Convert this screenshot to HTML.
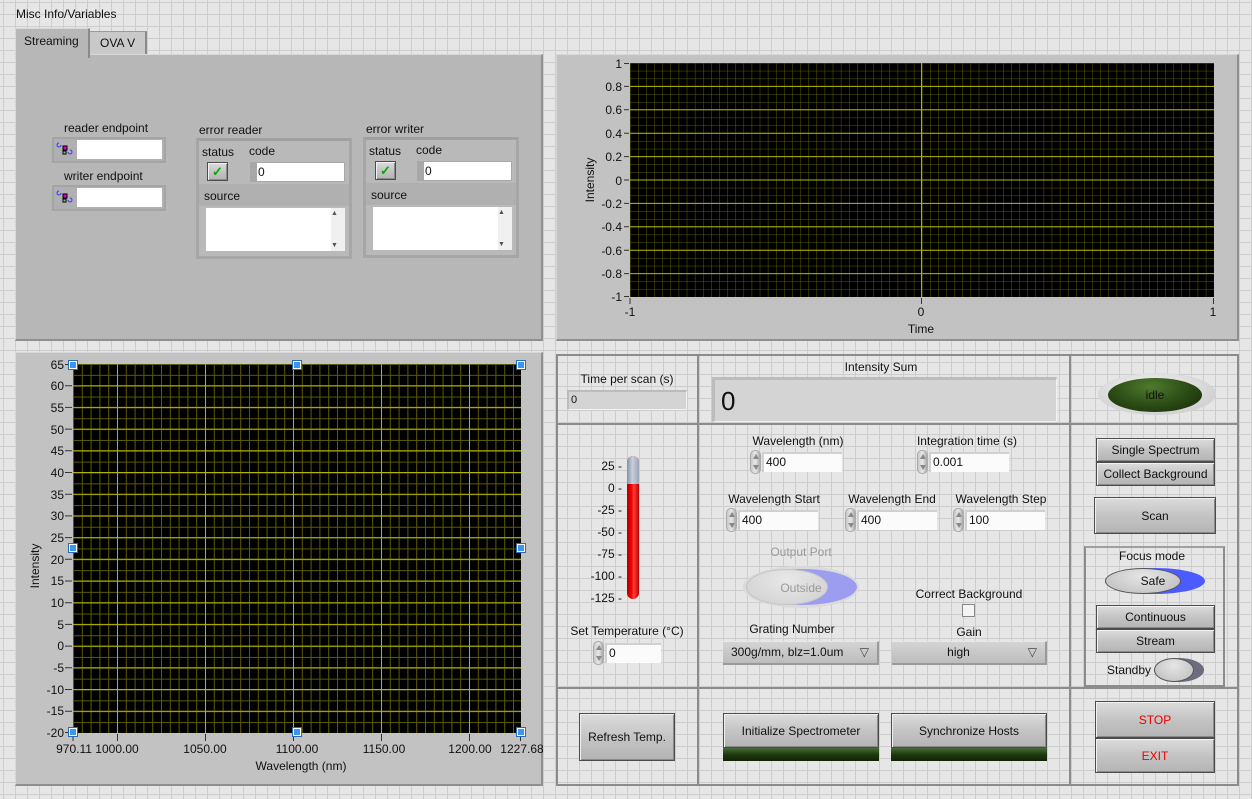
<!DOCTYPE html>
<html><head><meta charset="utf-8"><style>
*{box-sizing:border-box;margin:0;padding:0}
body{width:1252px;height:799px;overflow:hidden;position:relative;font-family:"Liberation Sans",sans-serif;font-size:12px;color:#111;
background-color:#e6e6e6;
background-image:linear-gradient(to right,#cdcdcd 1px,transparent 1px),linear-gradient(to bottom,#cdcdcd 1px,transparent 1px);
background-size:12px 12px;background-position:3px 2px}
.a{position:absolute}
.t{position:absolute;white-space:nowrap}
.c{position:absolute;white-space:nowrap;transform:translateX(-50%)}
.panel{position:absolute;background:#c2c2c2;border-right:2px solid #8f8f8f;border-bottom:2px solid #8f8f8f;border-left:1px solid #d8d8d8;border-top:1px solid #d8d8d8}
.frame{position:absolute;background:#b9b9b9;border:3px solid #a6a6a6;border-top-color:#a0a0a0}
.white{position:absolute;background:#fff}
.btn{position:absolute;background:linear-gradient(#dcdcdc,#c4c4c4 50%,#b4b4b4);border:1px solid #4c4c4c;box-shadow:inset 1px 1px 0 #f2f2f2,inset -1px -1px 0 #8a8a8a;display:flex;align-items:center;justify-content:center;font-size:12px}
.num{position:absolute;background:#fbfbfb;border-top:2px solid #d0d0d0;border-left:2px solid #d0d0d0;padding-left:2px;line-height:17px}
.spin{position:absolute;width:11px;height:24px;border-radius:5px;background:linear-gradient(to right,#c8c8c8,#e8e8e8,#a8a8a8);border:1px solid #aaa}
.spin:before{content:"";position:absolute;left:2px;top:3px;border:3px solid transparent;border-bottom:5px solid #888;border-top:0}
.spin:after{content:"";position:absolute;left:2px;bottom:3px;border:3px solid transparent;border-top:5px solid #888;border-bottom:0}
.line{position:absolute;background:#8c8c8c}
.drop{position:absolute;background:linear-gradient(#d4d4d4,#bcbcbc);border-top:1px solid #e8e8e8;border-bottom:2px solid #9a9a9a;border-right:2px solid #9a9a9a;line-height:20px}
.h{position:absolute;width:8px;height:8px;background:#3a96f0;border:1px solid #fff;outline:1px solid #2a6ab0}
.ico{position:absolute;width:18px;height:16px}
</style></head><body>

<div class="t" style="left:16px;top:7px">Misc Info/Variables</div>
<!-- tabs -->
<div class="a" style="left:89px;top:31px;width:58px;height:25px;background:#c9c9c9;border:1px solid #9a9a9a;border-right:2px solid #8a8a8a"></div>
<div class="t" style="left:100px;top:36px">OVA V</div>
<div class="panel" style="left:15px;top:54px;width:528px;height:287px;background:#b7b7b7"></div>
<div class="a" style="left:15px;top:28px;width:75px;height:30px;background:#b7b7b7;border:1px solid #d8d8d8;border-bottom:none;border-right:2px solid #8a8a8a"></div>
<div class="t" style="left:24px;top:34px">Streaming</div>

<!-- endpoints -->
<div class="t" style="left:64px;top:121px">reader endpoint</div>
<div class="a" style="left:52px;top:137px;width:114px;height:26px;border:2px solid #a4a4a4;background:#b0b0b0"></div>
<div class="white" style="left:77px;top:140px;width:85px;height:19px"></div>
<svg class="ico" style="left:56px;top:141px" viewBox="0 0 18 16"><path d="M3 2a2 2 0 1 0 2 2" stroke="#33f" fill="none"/><rect x="7" y="5" width="4" height="4" fill="#d0c" stroke="#000"/><rect x="7" y="10" width="3" height="3" fill="none" stroke="#000"/><path d="M12 11a2 2 0 1 0 2 -2" stroke="#33f" fill="none"/></svg>
<div class="t" style="left:64px;top:169px">writer endpoint</div>
<div class="a" style="left:52px;top:185px;width:114px;height:26px;border:2px solid #a4a4a4;background:#b0b0b0"></div>
<div class="white" style="left:77px;top:188px;width:85px;height:19px"></div>
<svg class="ico" style="left:56px;top:189px" viewBox="0 0 18 16"><path d="M3 2a2 2 0 1 0 2 2" stroke="#33f" fill="none"/><rect x="7" y="5" width="4" height="4" fill="#d0c" stroke="#000"/><rect x="7" y="10" width="3" height="3" fill="none" stroke="#000"/><path d="M12 11a2 2 0 1 0 2 -2" stroke="#33f" fill="none"/></svg>

<!-- error clusters -->
<div class="t" style="left:199px;top:123px">error reader</div>
<div class="frame" style="left:196px;top:138px;width:156px;height:121px"></div>
<div class="a" style="left:199px;top:184px;width:150px;height:22px;background:#b0b0b0"></div>
<div class="t" style="left:202px;top:145px">status</div>
<div class="t" style="left:249px;top:144px">code</div>
<div class="btn" style="left:207px;top:162px;width:21px;height:19px;color:#0a0;font-size:13px;font-weight:bold">✓</div>
<div class="a" style="left:250px;top:162px;width:95px;height:20px;background:#a8a8a8"></div>
<div class="white" style="left:257px;top:163px;width:87px;height:18px;line-height:18px;padding-left:1px">0</div>
<div class="t" style="left:204px;top:189px">source</div>
<div class="white" style="left:206px;top:208px;width:139px;height:43px;border-right:14px solid #f0f0f0"></div>
<div class="t" style="left:331px;top:210px;font-size:7px;color:#555">▲</div><div class="t" style="left:331px;top:242px;font-size:7px;color:#555">▼</div>

<div class="t" style="left:366px;top:122px">error writer</div>
<div class="frame" style="left:363px;top:137px;width:156px;height:121px"></div>
<div class="a" style="left:366px;top:183px;width:150px;height:22px;background:#b0b0b0"></div>
<div class="t" style="left:369px;top:144px">status</div>
<div class="t" style="left:416px;top:143px">code</div>
<div class="btn" style="left:375px;top:161px;width:21px;height:19px;color:#0a0;font-size:13px;font-weight:bold">✓</div>
<div class="a" style="left:417px;top:161px;width:95px;height:20px;background:#a8a8a8"></div>
<div class="white" style="left:424px;top:162px;width:87px;height:18px;line-height:18px;padding-left:1px">0</div>
<div class="t" style="left:371px;top:188px">source</div>
<div class="white" style="left:373px;top:207px;width:139px;height:43px;border-right:14px solid #f0f0f0"></div>
<div class="t" style="left:498px;top:209px;font-size:7px;color:#555">▲</div><div class="t" style="left:498px;top:241px;font-size:7px;color:#555">▼</div>

<!-- top-right graph -->
<div class="panel" style="left:556px;top:54px;width:683px;height:287px"></div>
<svg class="a" style="left:556px;top:54px" width="683" height="287">
<defs>
<pattern id="p1" x="74" y="9" width="8.11" height="7.8" patternUnits="userSpaceOnUse"><path d="M0 0H9M0 0V8" stroke="#5c5c00" stroke-width="1"/></pattern>
</defs>
<rect x="74" y="9" width="584" height="234" fill="#000"/>
<rect x="74" y="9" width="584" height="234" fill="url(#p1)"/>
<g stroke="#b4b400" stroke-width="1">
<path d="M74 32.4H658M74 55.8H658M74 79.2H658M74 102.6H658M74 126H658M74 149.4H658M74 172.8H658M74 196.2H658M74 219.6H658M365.5 9V243"/>
</g>
<g stroke="#333" stroke-width="1">
<path d="M68 9.5H73M68 32.4H73M68 55.8H73M68 79.2H73M68 102.6H73M68 126H73M68 149.4H73M68 172.8H73M68 196.2H73M68 219.6H73M68 242.5H73M74 244V250M365.5 244V250M657.5 244V250"/>
</g>
<g font-family="Liberation Sans" font-size="12" fill="#111" text-anchor="end">
<text x="66" y="14">1</text><text x="66" y="37">0.8</text><text x="66" y="60">0.6</text><text x="66" y="84">0.4</text><text x="66" y="107">0.2</text><text x="66" y="131">0</text><text x="66" y="154">-0.2</text><text x="66" y="177">-0.4</text><text x="66" y="201">-0.6</text><text x="66" y="224">-0.8</text><text x="66" y="247">-1</text>
</g>
<g font-family="Liberation Sans" font-size="12" fill="#111" text-anchor="middle">
<text x="74" y="262">-1</text><text x="365" y="262">0</text><text x="657" y="262">1</text><text x="365" y="279">Time</text>
<text transform="translate(38,126) rotate(-90)">Intensity</text>
</g>
</svg>

<!-- bottom-left graph -->
<div class="panel" style="left:15px;top:352px;width:528px;height:434px"></div>
<svg class="a" style="left:15px;top:352px" width="528" height="434">
<defs>
<pattern id="p2" x="102" y="12" width="8.8" height="10.85" patternUnits="userSpaceOnUse"><path d="M0.5 0H9M0 0.5H9M0.5 0V11" stroke="#5c5c00" stroke-width="1"/></pattern>
</defs>
<rect x="58" y="12" width="448" height="369" fill="#000"/>
<rect x="58" y="12" width="448" height="369" fill="url(#p2)"/>
<g stroke="#b4b400" stroke-width="1">
<path d="M58 33.7H506M58 55.4H506M58 77.1H506M58 98.8H506M58 120.5H506M58 142.2H506M58 163.9H506M58 185.6H506M58 207.3H506M58 229H506M58 250.7H506M58 272.4H506M58 294.1H506M58 315.8H506M58 337.5H506M58 359.2H506M102.5 12V381M190.5 12V381M278.5 12V381M366.5 12V381M454.5 12V381"/>
</g>
<g stroke="#333" stroke-width="1">
<path d="M50 12.5H57M50 33.7H57M50 55.4H57M50 77.1H57M50 98.8H57M50 120.5H57M50 142.2H57M50 163.9H57M50 185.6H57M50 207.3H57M50 229H57M50 250.7H57M50 272.4H57M50 294.1H57M50 315.8H57M50 337.5H57M50 359.2H57M50 380.5H57M58 382V389M102.5 382V389M190.5 382V389M278.5 382V389M366.5 382V389M454.5 382V389M505.5 382V389"/>
</g>
<g font-family="Liberation Sans" font-size="12" fill="#111" text-anchor="end">
<text x="49" y="17">65</text><text x="49" y="38">60</text><text x="49" y="60">55</text><text x="49" y="82">50</text><text x="49" y="103">45</text><text x="49" y="125">40</text><text x="49" y="147">35</text><text x="49" y="168">30</text><text x="49" y="190">25</text><text x="49" y="212">20</text><text x="49" y="233">15</text><text x="49" y="255">10</text><text x="49" y="277">5</text><text x="49" y="298">0</text><text x="49" y="320">-5</text><text x="49" y="342">-10</text><text x="49" y="363">-15</text><text x="49" y="385">-20</text>
</g>
<g font-family="Liberation Sans" font-size="12" fill="#111" text-anchor="middle">
<text x="59" y="401">970.11</text><text x="102" y="401">1000.00</text><text x="190" y="401">1050.00</text><text x="282" y="401">1100.00</text><text x="369" y="401">1150.00</text><text x="455" y="401">1200.00</text><text x="507" y="401">1227.68</text>
<text x="286" y="418">Wavelength (nm)</text>
<text transform="translate(24,214) rotate(-90)">Intensity</text>
</g>
</svg>
<div class="h" style="left:69px;top:361px"></div><div class="h" style="left:293px;top:361px"></div><div class="h" style="left:517px;top:361px"></div>
<div class="h" style="left:69px;top:544px"></div><div class="h" style="left:517px;top:544px"></div>
<div class="h" style="left:69px;top:728px"></div><div class="h" style="left:293px;top:728px"></div><div class="h" style="left:517px;top:728px"></div>

<!-- right control cluster frame -->
<div class="a" style="left:556px;top:354px;width:683px;height:432px;border:2px solid #8c8c8c"></div>
<div class="line" style="left:558px;top:423px;width:679px;height:2px"></div>
<div class="line" style="left:558px;top:687px;width:679px;height:2px"></div>
<div class="line" style="left:697px;top:356px;width:2px;height:428px"></div>
<div class="line" style="left:1069px;top:356px;width:2px;height:428px"></div>

<div class="c" style="left:627px;top:372px">Time per scan (s)</div>
<div class="a" style="left:567px;top:390px;width:120px;height:20px;background:#d4d4d4;border-top:2px solid #bcbcbc;border-left:2px solid #bcbcbc;border-right:1px solid #f2f2f2;border-bottom:1px solid #f2f2f2;padding-left:2px;line-height:16px;font-size:11px">0</div>
<div class="c" style="left:881px;top:360px">Intensity Sum</div>
<div class="a" style="left:712px;top:377px;width:345px;height:45px;background:#d4d4d4;border-top:3px solid #bcbcbc;border-left:3px solid #bcbcbc;border-right:1px solid #f2f2f2;border-bottom:1px solid #f2f2f2;padding-left:6px;line-height:42px;font-size:26px">0</div>
<div class="a" style="left:1098px;top:373px;width:118px;height:42px;border-radius:50%;background:radial-gradient(ellipse at 45% 40%,#f8f8f8,#d2d2d2 70%,#e6e6e6)"></div>
<div class="a" style="left:1108px;top:378px;width:94px;height:34px;border-radius:50%;background:radial-gradient(ellipse at 45% 25%,#4e7a2e,#2a4a14 55%,#142608);display:flex;align-items:center;justify-content:center">idle</div>

<!-- thermometer -->
<div class="a" style="left:627px;top:456px;width:12px;height:143px;border-radius:6px;background:linear-gradient(to right,#a00,#f00 40%,#ff4040 55%,#b00);"></div>
<div class="a" style="left:627px;top:456px;width:12px;height:28px;border-radius:6px 6px 0 0;background:linear-gradient(to right,#8090a8,#c8d0dc 45%,#9aa4b8)"></div>
<div class="t" style="left:586px;top:455px;width:36px;text-align:right;line-height:22px;font-size:12px">25 -<br>0 -<br>-25 -<br>-50 -<br>-75 -<br>-100 -<br>-125 -</div>
<div class="c" style="left:627px;top:624px">Set Temperature (°C)</div>
<div class="spin" style="left:593px;top:641px"></div>
<div class="num" style="left:605px;top:643px;width:56px;height:20px">0</div>

<!-- middle controls -->
<div class="c" style="left:798px;top:434px">Wavelength (nm)</div>
<div class="spin" style="left:750px;top:450px"></div>
<div class="num" style="left:762px;top:452px;width:80px;height:20px">400</div>
<div class="c" style="left:967px;top:434px">Integration time (s)</div>
<div class="spin" style="left:917px;top:450px"></div>
<div class="num" style="left:929px;top:452px;width:80px;height:20px">0.001</div>
<div class="c" style="left:774px;top:492px">Wavelength Start</div>
<div class="spin" style="left:726px;top:508px"></div>
<div class="num" style="left:738px;top:510px;width:80px;height:20px">400</div>
<div class="c" style="left:892px;top:492px">Wavelength End</div>
<div class="spin" style="left:845px;top:508px"></div>
<div class="num" style="left:857px;top:510px;width:80px;height:20px">400</div>
<div class="c" style="left:1001px;top:492px">Wavelength Step</div>
<div class="spin" style="left:953px;top:508px"></div>
<div class="num" style="left:965px;top:510px;width:80px;height:20px">100</div>

<div class="c" style="left:801px;top:545px;color:#9a9a9a">Output Port</div>
<div class="a" style="left:743px;top:566px;width:116px;height:42px;border-radius:50%;background:#dadada"></div>
<div class="a" style="left:747px;top:569px;width:110px;height:36px;border-radius:50%;background:#9c9cf0"></div>
<div class="a" style="left:746px;top:569px;width:82px;height:36px;border-radius:50%;background:radial-gradient(ellipse at 50% 30%,#e8e8e8,#cfcfcf);border:1px solid #c4c4c4"></div>
<div class="c" style="left:801px;top:581px;color:#999">Outside</div>

<div class="c" style="left:969px;top:587px">Correct Background</div>
<div class="a" style="left:962px;top:604px;width:13px;height:13px;background:#f4f4f4;border:1px solid #888"></div>
<div class="c" style="left:792px;top:622px">Grating Number</div>
<div class="drop" style="left:723px;top:641px;width:156px;height:24px;padding-left:8px">300g/mm, blz=1.0um<span style="position:absolute;right:8px;top:0;color:#444">▽</span></div>
<div class="c" style="left:969px;top:625px">Gain</div>
<div class="drop" style="left:892px;top:641px;width:155px;height:24px;text-align:center;padding-right:20px">high<span style="position:absolute;right:8px;top:0;color:#444">▽</span></div>

<!-- right column -->
<div class="btn" style="left:1096px;top:438px;width:119px;height:24px">Single Spectrum</div>
<div class="btn" style="left:1096px;top:462px;width:119px;height:24px">Collect Background</div>
<div class="btn" style="left:1094px;top:497px;width:122px;height:37px">Scan</div>
<div class="a" style="left:1084px;top:546px;width:141px;height:141px;border:2px solid #8c8c8c;border-top-color:#a0a0a0"></div>
<div class="c" style="left:1152px;top:549px">Focus mode</div>
<div class="a" style="left:1105px;top:568px;width:100px;height:26px;border-radius:50%;background:#4a5cff"></div>
<div class="a" style="left:1105px;top:568px;width:76px;height:26px;border-radius:50%;background:radial-gradient(ellipse at 50% 30%,#e6e6e6,#bbb);border:1px solid #555;display:flex;align-items:center;justify-content:center;padding-left:20px">Safe</div>
<div class="btn" style="left:1096px;top:605px;width:119px;height:24px">Continuous</div>
<div class="btn" style="left:1096px;top:629px;width:119px;height:24px">Stream</div>
<div class="t" style="left:1107px;top:663px">Standby</div>
<div class="a" style="left:1154px;top:658px;width:50px;height:24px;border-radius:50%;background:#6c6c80"></div>
<div class="a" style="left:1154px;top:658px;width:40px;height:24px;border-radius:50%;background:radial-gradient(ellipse at 50% 30%,#e6e6e6,#bbb);border:1px solid #555"></div>

<!-- bottom row -->
<div class="btn" style="left:579px;top:713px;width:96px;height:48px">Refresh Temp.</div>
<div class="btn" style="left:723px;top:713px;width:156px;height:35px">Initialize Spectrometer</div>
<div class="a" style="left:723px;top:748px;width:156px;height:13px;background:linear-gradient(#4a6a3a,#1e3a0e 50%,#102206)"></div>
<div class="btn" style="left:891px;top:713px;width:156px;height:35px">Synchronize Hosts</div>
<div class="a" style="left:891px;top:748px;width:156px;height:13px;background:linear-gradient(#4a6a3a,#1e3a0e 50%,#102206)"></div>
<div class="btn" style="left:1095px;top:701px;width:120px;height:37px;color:#e00">STOP</div>
<div class="btn" style="left:1095px;top:738px;width:120px;height:35px;color:#e00">EXIT</div>

</body></html>
